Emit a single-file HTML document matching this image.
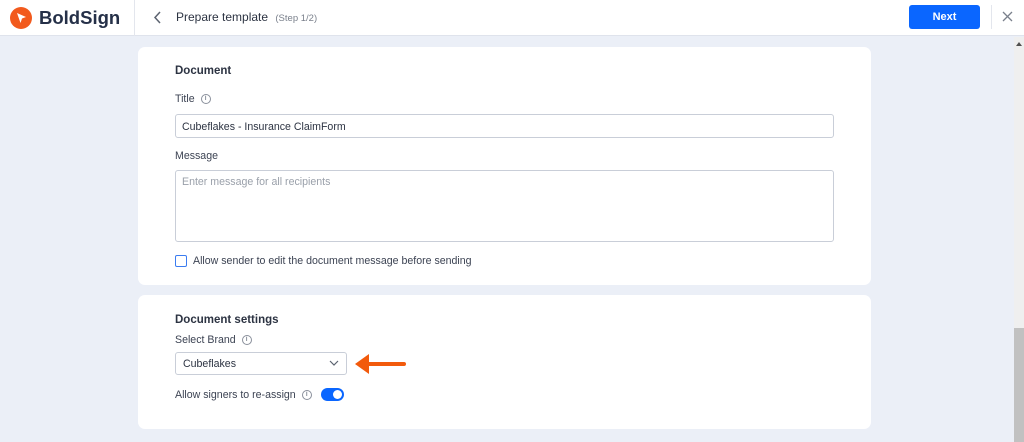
<!DOCTYPE html>
<html><head><style>
*{box-sizing:border-box;margin:0;padding:0}
body{width:1024px;height:442px;overflow:hidden;background:#ebeff7;font-family:"Liberation Sans",sans-serif;color:#2c3342;position:relative}
.hdr{position:absolute;left:0;top:0;width:1024px;height:36px;background:#fff;border-bottom:1px solid #dfe3ec}
.a{position:absolute}
.card{position:absolute;left:138px;width:733px;background:#fff;border-radius:7px}
.lbl{position:absolute;font-size:10.6px;color:#3c4353}
.inp{position:absolute;border:1px solid #c9ced8;border-radius:3px;background:#fff;font-size:10.6px}
.info{display:inline-block;width:10px;height:10px;border:1px solid #8a909c;border-radius:50%;font-size:7px;line-height:8px;text-align:center;color:#8a909c;vertical-align:middle;margin-left:6px;font-weight:bold}
</style></head><body>
<div class="hdr">
 <div class="a" style="left:10px;top:7px;width:22px;height:22px;border-radius:50%;background:#f25a1d"></div>
 <svg class="a" style="left:10px;top:7px" width="22" height="22" viewBox="0 0 22 22"><path d="M7 6 L16 10 L12 11.5 L10.5 16 Z" fill="#fff"/></svg>
 <div class="a" style="left:39px;top:7px;font-size:18.5px;font-weight:bold;color:#253048">BoldSign</div>
 <div class="a" style="left:134px;top:0;width:1px;height:36px;background:#e3e6ed"></div>
 <svg class="a" style="left:153px;top:11px" width="10" height="13"><path d="M7 1 L2 6.5 L7 12" stroke="#5c6370" stroke-width="1.5" fill="none"/></svg>
 <div class="a" style="left:176px;top:10px;font-size:12px;color:#2c3342">Prepare template <span style="font-size:9.5px;color:#7a808c;margin-left:4px">(Step 1/2)</span></div>
 <div class="a" style="left:909px;top:5px;width:71px;height:24px;background:#0a66ff;border-radius:3px;color:#fff;font-size:11px;font-weight:bold;text-align:center;line-height:24px">Next</div>
 <div class="a" style="left:991px;top:5px;width:1px;height:24px;background:#e3e6ed"></div>
 <svg class="a" style="left:1002px;top:11px" width="11" height="11"><path d="M1 1L10 10M10 1L1 10" stroke="#7a808c" stroke-width="1.3"/></svg>
</div>
<div class="a" style="left:1014px;top:37px;width:10px;height:405px;background:#efefef"></div>
<div class="a" style="left:1014px;top:328px;width:10px;height:114px;background:#c1c1c1"></div>
<svg class="a" style="left:1016px;top:42px" width="6" height="4"><path d="M0 4L3 0L6 4Z" fill="#505050"/></svg>

<div class="card" style="top:47px;height:238px">
 <div class="a" style="left:37px;top:18px;font-size:11.5px;font-weight:bold">Document</div>
 <div class="lbl" style="left:37px;top:46px">Title<span class="info">i</span></div>
 <div class="inp" style="left:37px;top:67px;width:659px;height:24px;padding:6px 6px;color:#2c3342">Cubeflakes - Insurance ClaimForm</div>
 <div class="lbl" style="left:37px;top:103px">Message</div>
 <div class="inp" style="left:37px;top:123px;width:659px;height:72px;padding:5px 6px;color:#9aa0aa">Enter message for all recipients</div>
 <div class="a" style="left:37px;top:208px;width:12px;height:12px;border:1.5px solid #3b7cf0;border-radius:2px"></div>
 <div class="lbl" style="left:55px;top:208px">Allow sender to edit the document message before sending</div>
</div>

<div class="card" style="top:295px;height:134px">
 <div class="a" style="left:37px;top:19px;font-size:11.5px;font-weight:bold">Document settings</div>
 <div class="lbl" style="left:37px;top:39px">Select Brand<span class="info">i</span></div>
 <div class="inp" style="left:37px;top:57px;width:172px;height:23px;padding:5px 7px;color:#2c3342">Cubeflakes</div>
 <svg class="a" style="left:191px;top:65px" width="10" height="6"><path d="M1 1L5 5L9 1" stroke="#5c6370" stroke-width="1.2" fill="none"/></svg>
 <svg class="a" style="left:215px;top:57px" width="54" height="24"><path d="M16 12H51" stroke="#f25a0c" stroke-width="4" stroke-linecap="round"/><path d="M2 12L16 2V22Z" fill="#f25a0c"/></svg>
 <div class="lbl" style="left:37px;top:94px">Allow signers to re-assign<span class="info">i</span></div>
 <div class="a" style="left:183px;top:93px;width:23px;height:13px;background:#0a66ff;border-radius:7px"></div>
 <div class="a" style="left:195px;top:95px;width:9px;height:9px;background:#fff;border-radius:50%"></div>
</div>
</body></html>
